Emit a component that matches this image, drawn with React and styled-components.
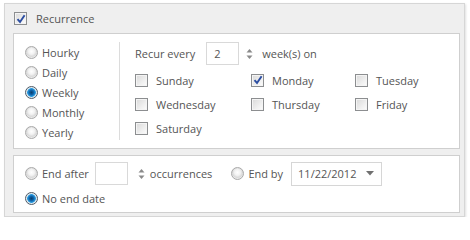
import React from 'react';
import styled, { createGlobalStyle } from 'styled-components';

const GlobalStyle = createGlobalStyle`
  body {
    margin: 0;
    background: #ffffff;
    font-family: "Open Sans", "Noto Sans", sans-serif;
    font-size: 11px;
    color: #555555;
  }
`;

const Outer = styled.div`
  margin: 3px 0 0 4px;
  width: 447px;
  padding: 0 4px 3px 8px;
  background: #efefef;
  border: 1px solid #d6d6d6;
  box-shadow: 1px 1px 2px rgba(0, 0, 0, 0.12);
`;

const Header = styled.label`
  display: flex;
  align-items: center;
  gap: 9px;
  height: 29px;
  padding-left: 1px;
`;

const Panel = styled.div`
  background: #ffffff;
  border: 1px solid #cfcfcf;
  margin-bottom: ${(p) => p.$gap || 0}px;
`;

const TopPanel = styled(Panel)`
  display: flex;
  padding-top: 8px;
  box-sizing: border-box;
  height: 116px;
`;

const FreqColumn = styled.div`
  width: 94px;
  padding-left: 11px;
  border-right: 1px solid #dcdcdc;
  margin-bottom: 8px;
`;

const OptionRow = styled.label`
  display: flex;
  align-items: center;
  gap: 4px;
  height: ${(p) => p.$h || 20}px;
  white-space: nowrap;
`;

const RadioDot = styled.span`
  width: 11px;
  height: 11px;
  border-radius: 50%;
  border: 1px solid ${(p) => (p.$on ? '#4f5a66' : '#a9a9a9')};
  background: ${(p) =>
    p.$on
      ? 'radial-gradient(circle at 50% 50%, #0c3f6b 0, #0d5ea3 2px, #2a9be0 4px, #d8e6ee 4.6px, #eef3f6 6px)'
      : 'radial-gradient(circle at 50% 40%, #ffffff 0, #f2f2f2 3px, #d9d9d9 5px, #eaeaea 6px)'};
  flex: none;
`;

const Box = styled.span`
  width: 11px;
  height: 11px;
  border: 1px solid #8c8e90;
  background: linear-gradient(135deg, #d9d9d9 0%, #f6f6f6 80%, #ffffff 100%);
  box-shadow: inset 0 0 0 1px #f4f4f4;
  display: flex;
  align-items: center;
  justify-content: center;
  flex: none;
`;

const RecurColumn = styled.div`
  flex: 1;
  padding-left: 15px;
`;

const EveryRow = styled.div`
  display: flex;
  align-items: center;
  height: 23px;
  padding-bottom: 3px;
`;

const NumberBox = styled.div`
  width: 33px;
  height: 23px;
  border: 1px solid #d9d9d9;
  background: #fff;
  padding-left: 7px;
  box-sizing: border-box;
  display: flex;
  align-items: center;
  margin-left: ${(p) => p.$ml || 0}px;
`;

const Spin = styled.span`
  display: inline-flex;
  margin: 0 ${(p) => p.$mr || 8}px 0 ${(p) => p.$ml || 7}px;
`;

const DayGrid = styled.div`
  display: grid;
  grid-template-columns: 116px 104px auto;
  grid-auto-rows: 24px;
`;

const DayCheck = styled(OptionRow)`
  gap: 8px;
  height: 24px;
`;

const BottomPanel = styled(Panel)`
  height: 58px;
  box-sizing: border-box;
  padding: 5px 0 0 11px;
`;

const EndRow = styled.div`
  display: flex;
  align-items: center;
  height: 25px;
`;

const Gap = styled.span`
  width: ${(p) => p.$w}px;
`;

const DateSelect = styled.div`
  width: 91px;
  height: 24px;
  box-sizing: border-box;
  border: 1px solid #d6d6d6;
  display: flex;
  align-items: center;
  padding: 0 7px 0 6px;
  justify-content: space-between;
  margin-left: 8px;
`;

const Radio = ({ on, children, h }) => (
  <OptionRow $h={h}>
    <RadioDot $on={on} />
    {children}
  </OptionRow>
);

const Check = ({ on }) => (
  <Box>
    {on && (
      <svg width="10" height="10" viewBox="0 0 10 10">
        <path d="M1.5 5.2 L4 8 L8.6 1.2" fill="none" stroke="#2b4da1" strokeWidth="1.9" />
      </svg>
    )}
  </Box>
);

const Spinner = (props) => (
  <Spin {...props}>
    <svg width="7" height="12" viewBox="0 0 7 12">
      <path d="M0.5 4.5 L3.5 1 L6.5 4.5 Z" fill="#8a8a8a" />
      <path d="M0.5 7.5 L3.5 11 L6.5 7.5 Z" fill="#8a8a8a" />
    </svg>
  </Spin>
);

const days = [
  ['Sunday', false],
  ['Monday', true],
  ['Tuesday', false],
  ['Wednesday', false],
  ['Thursday', false],
  ['Friday', false],
  ['Saturday', false],
];

const frequencies = ['Hourky', 'Daily', 'Weekly', 'Monthly', 'Yearly'];

const App = () => (
  <>
    <GlobalStyle />
    <Outer>
      <Header>
        <Check on />
        Recurrence
      </Header>
      <TopPanel $gap={6}>
        <FreqColumn>
          {frequencies.map((f) => (
            <Radio key={f} on={f === 'Weekly'}>
              {f}
            </Radio>
          ))}
        </FreqColumn>
        <RecurColumn>
          <EveryRow>
            Recur every
            <NumberBox $ml={11}>2</NumberBox>
            <Spinner $mr={9} />
            week(s) on
          </EveryRow>
          <DayGrid>
            {days.map(([d, on]) => (
              <DayCheck key={d}>
                <Check on={on} />
                {d}
              </DayCheck>
            ))}
          </DayGrid>
        </RecurColumn>
      </TopPanel>
      <BottomPanel>
        <EndRow>
          <Radio h={25}>End after</Radio>
          <NumberBox $ml={6} />
          <Spinner $ml={10} $mr={5} />
          occurrences
          <Gap $w={19} />
          <Radio h={25}>End by</Radio>
          <DateSelect>
            11/22/2012
            <svg width="8" height="5" viewBox="0 0 8 5">
              <path d="M0 0 L8 0 L4 4.5 Z" fill="#707070" />
            </svg>
          </DateSelect>
        </EndRow>
        <Radio on h={25}>
          No end date
        </Radio>
      </BottomPanel>
    </Outer>
  </>
);

export default App;
